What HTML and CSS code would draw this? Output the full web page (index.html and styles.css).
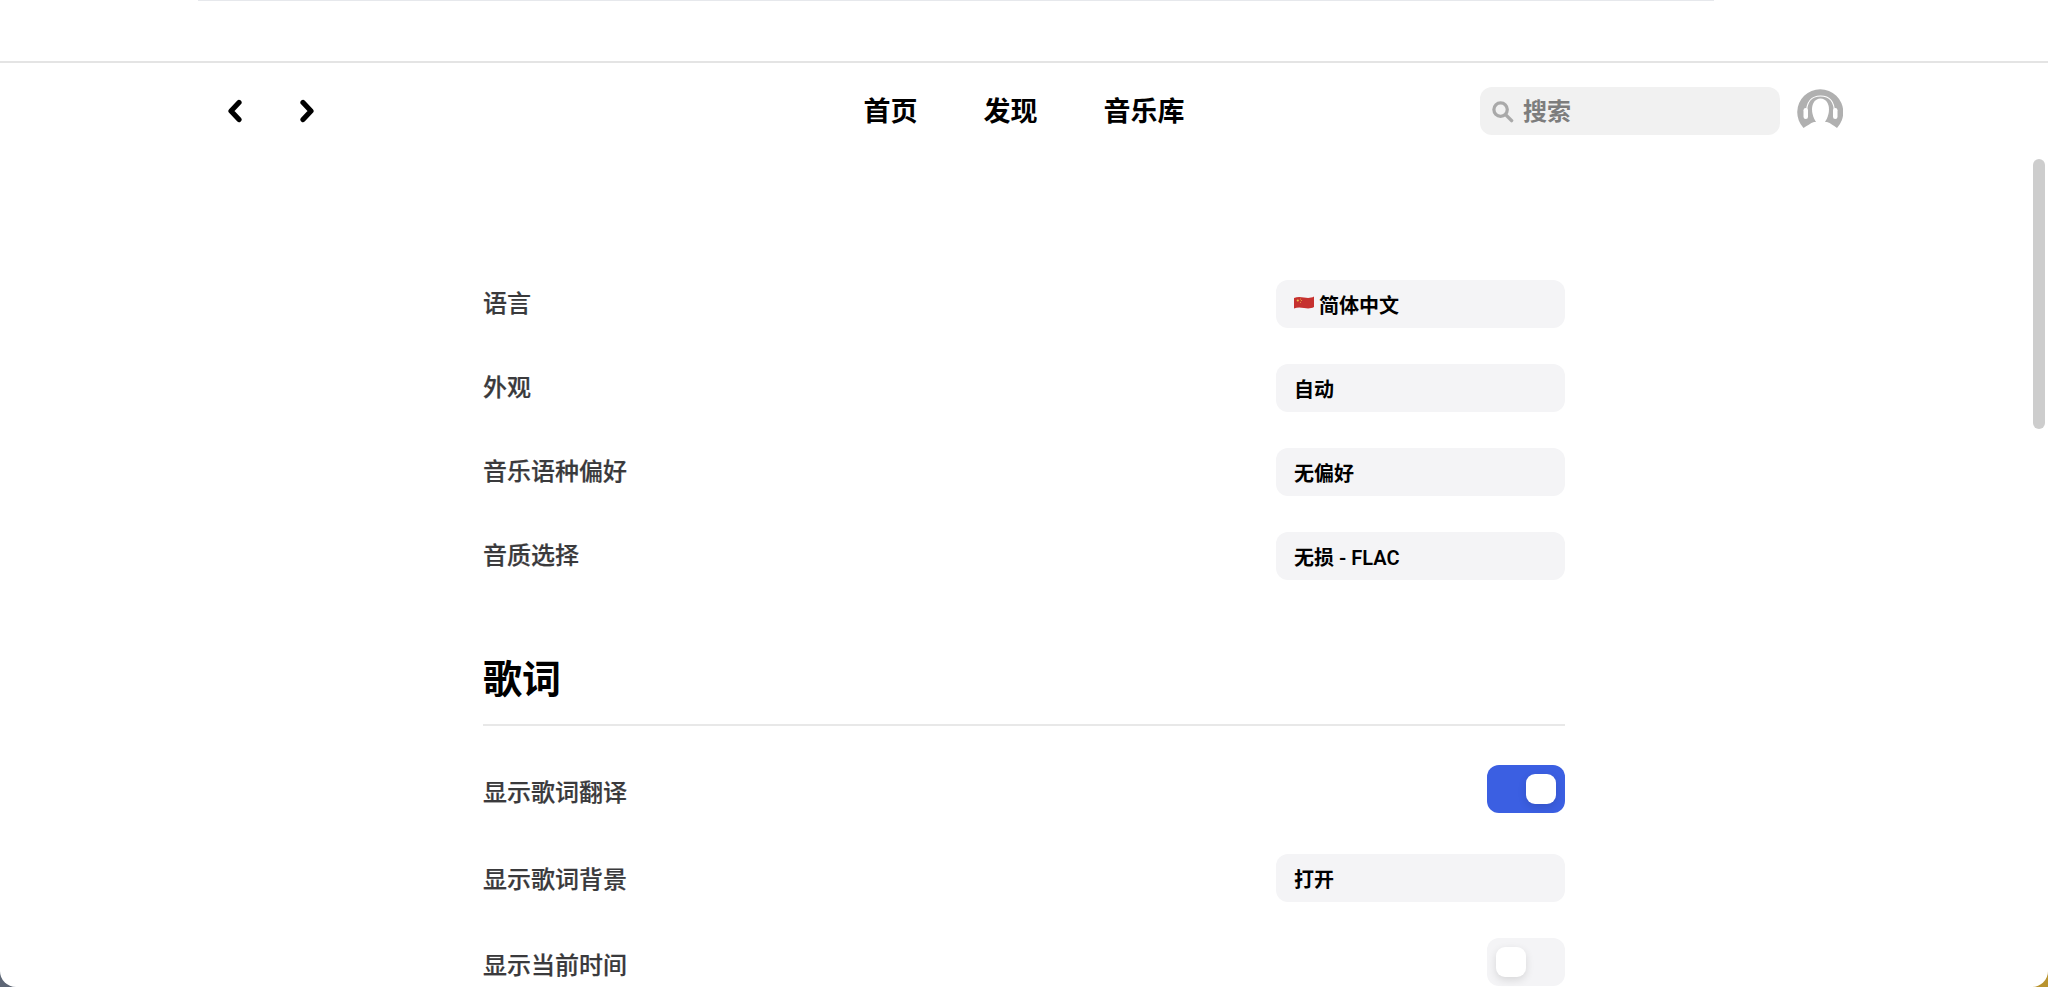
FILE: index.html
```html
<!DOCTYPE html>
<html lang="zh-CN">
<head>
<meta charset="utf-8">
<title>设置</title>
<link rel="stylesheet" href="styles.css">
</head>
<body>
<div class="window">
  <div class="top-strip"><div class="top-rule"></div></div>
  <header class="navbar">
    <div class="nav-arrows">
      <button class="arrow"><svg viewBox="0 0 20 24" width="20" height="24"><path d="M14 3.500 6 12 14 20.500" class="chev"/></svg></button>
      <button class="arrow"><svg viewBox="0 0 20 24" width="20" height="24"><path d="M6 3.500 14 12 6 20.500" class="chev"/></svg></button>
    </div>
    <nav class="nav-links"><a>首页</a><a>发现</a><a>音乐库</a></nav>
    <div class="nav-right">
      <div class="search">
        <svg class="search-icon" viewBox="0 0 24 24" width="23" height="23"><circle cx="10" cy="10" r="7" fill="none" stroke="#a9a9a9" stroke-width="3.400"/><path d="M15.500 15.500 21.500 21.500" stroke="#a9a9a9" stroke-width="3.600" stroke-linecap="round"/></svg>
        <span class="search-text">搜索</span>
      </div>
      <svg class="avatar" viewBox="0 0 46 46" width="46" height="46">
        <path d="M6.500 40A23 23 0 1 1 40 40C37 38 33.500 35 30 34H17C13.500 35 10 38 6.500 40Z" fill="#b0b0b0"/>
        <path d="M9.500 25C9.500 14 14.500 8 23.500 8S37.500 14 37.500 25" fill="none" stroke="#fff" stroke-width="1.200"/>
        <path d="M23.500 10.500C18 10.500 15 15.500 15 21.500 15 27.500 18.500 34.500 21 36 22.500 36.700 24.500 36.700 26 36 28.500 34.500 32 27.500 32 21.500 32 15.500 29 10.500 23.500 10.500Z" fill="#fff"/>
        <rect x="6.500" y="20" width="4.500" height="11" rx="2.250" fill="#fff"/>
        <rect x="36" y="20" width="4.500" height="11" rx="2.250" fill="#fff"/>
      </svg>
    </div>
  </header>
  <main class="settings">
    <div class="row">
      <div class="label">语言</div>
      <div class="select">
        <svg class="flag" viewBox="0 0 20 14" width="20" height="15"><path d="M0 2.600C3 1.200 6 1.200 10 2c4 .8 7 .6 10-1v10.500c-3 1.600-6 1.800-10 1-4-.8-7-.8-10 .6Z" fill="#c6312f"/><circle cx="3.800" cy="5" r="1.100" fill="#eec24a"/><circle cx="6.400" cy="3.400" r=".5" fill="#eec24a"/><circle cx="7.400" cy="5" r=".5" fill="#eec24a"/><circle cx="6.400" cy="6.800" r=".5" fill="#eec24a"/></svg>
        <span>简体中文</span>
      </div>
    </div>
    <div class="row"><div class="label">外观</div><div class="select">自动</div></div>
    <div class="row"><div class="label">音乐语种偏好</div><div class="select">无偏好</div></div>
    <div class="row"><div class="label">音质选择</div><div class="select">无损 - FLAC</div></div>
    <h2 class="section-title">歌词</h2>
    <div class="row toggle-row"><div class="label">显示歌词翻译</div><div class="toggle on"><span class="knob"></span></div></div>
    <div class="row lyric-row"><div class="label">显示歌词背景</div><div class="select">打开</div></div>
    <div class="row toggle-row"><div class="label">显示当前时间</div><div class="toggle"><span class="knob"></span></div></div>
  </main>
  <div class="scroll-thumb"></div>
</div>
</body>
</html>
```
FILE: styles.css
```css
* { box-sizing: border-box; }
html, body { margin: 0; height: 100%; overflow: hidden; }
html { background: linear-gradient(to right, #5d6675 50%, #b9942f 50%); }
body {
  font-family: Roboto, "Noto Sans CJK SC", sans-serif;
  color: #000;
}
.window {
  position: relative;
  height: 987px;
  background: #fff;
  border-radius: 0 0 16px 16px;
  overflow: hidden;
}
.top-strip {
  height: 63px;
  padding: 0 334px 0 198px;
  border-bottom: 2px solid #e4e4e4;
}
.top-rule { height: 1px; background: #e6e8ec; }
.navbar {
  height: 96px;
  padding: 0 205px;
  display: grid;
  grid-template-columns: 1fr auto 1fr;
  align-items: center;
}
.nav-arrows { display: flex; gap: 52px; padding-left: 20px; }
.arrow { border: 0; padding: 0; background: none; width: 20px; height: 24px; }
.chev { fill: none; stroke: #000; stroke-width: 5.200; stroke-linecap: round; stroke-linejoin: round; }
.nav-links { display: flex; gap: 66px; padding-bottom: 4px; font-size: 27px; font-weight: 700; }
.nav-right { display: flex; justify-content: flex-end; align-items: center; gap: 17px; }
.search {
  width: 300px;
  height: 48px;
  background: #f1f1f1;
  border-radius: 12px;
  display: flex;
  align-items: center;
  gap: 9px;
  padding-left: 11px;
  color: #7d7d7d;
  font-size: 24px;
  font-weight: 700;
}
.search-text { padding-bottom: 4px; }
.avatar { display: block; }
.settings {
  width: 1082px;
  margin: 0 auto;
  padding-top: 121px;
}
.row {
  display: flex;
  justify-content: space-between;
  align-items: center;
  height: 48px;
  margin-bottom: 36px;
}
.toggle-row { margin-bottom: 41px; }
.label {
  padding-bottom: 5px;
  font-size: 24px;
  font-weight: 500;
  color: #3a3a3c;
  -webkit-text-stroke: .2px #3a3a3c;
}
.toggle-row .label { padding-bottom: 0; padding-top: 2px; }
.lyric-row .label { padding-bottom: 1px; }
.select {
  width: 289px;
  height: 48px;
  border-radius: 12px;
  background: #f4f4f6;
  padding-left: 18px;
  display: flex;
  align-items: center;
  gap: 5px;
  font-size: 20px;
  font-weight: 600;
}
.flag { display: block; margin-top: -3px; }
.section-title {
  margin: 67px 0 39px;
  height: 79px;
  padding-top: 3px;
  font-size: 39px;
  line-height: 60px;
  font-weight: 700;
  border-bottom: 2px solid #e8e8e8;
}
.toggle {
  width: 78px;
  height: 48px;
  border-radius: 12px;
  background: #f4f4f6;
  padding: 9px;
  display: flex;
}
.toggle.on { background: #3b5fe2; justify-content: flex-end; }
.knob {
  width: 30px;
  height: 30px;
  border-radius: 9px;
  background: #fff;
  box-shadow: 0 3px 8px rgba(0, 0, 0, .12);
}
.scroll-thumb {
  position: absolute;
  top: 159px;
  right: 3px;
  width: 12px;
  height: 270px;
  border-radius: 6px;
  background: #cdcdcd;
}
```
